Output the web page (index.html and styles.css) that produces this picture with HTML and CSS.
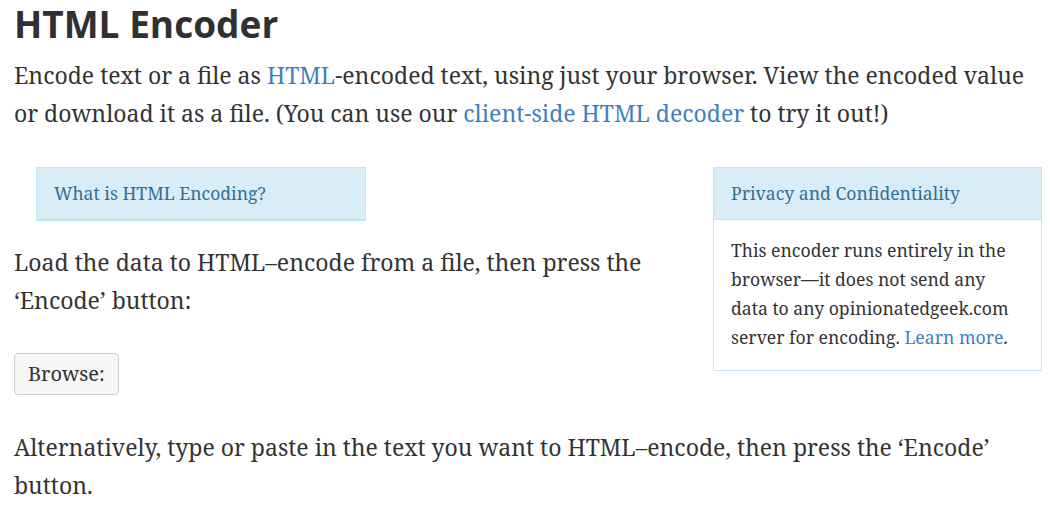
FILE: index.html
```html
<!DOCTYPE html>
<html lang="en">
<head>
<meta charset="utf-8">
<title>HTML Encoder</title>
<link rel="stylesheet" href="styles.css">
</head>
<body>
<main class="page">
  <h1 class="title">HTML Encoder</h1>
  <p class="lead">Encode text or a file as <a href="#">HTML</a>-encoded text, using just your browser. View the encoded value or download it as a file. (You can use our <a href="#">client-side HTML decoder</a> to try it out!)</p>

  <aside class="panel panel-right">
    <div class="panel-heading">Privacy and Confidentiality</div>
    <div class="panel-body">This encoder runs entirely in the browser—it does not send any data to any opinionatedgeek.com server for encoding. <a href="#">Learn more</a>.</div>
  </aside>

  <div class="panel panel-left">
    <div class="panel-heading">What is HTML Encoding?</div>
  </div>

  <p class="text text-load">Load the data to HTML–encode from a file, then press the ‘Encode’ button:</p>

  <div class="file-row"><button class="btn" type="button">Browse:</button></div>

  <p class="text">Alternatively, type or paste in the text you want to HTML–encode, then press the ‘Encode’ button.</p>
</main>
</body>
</html>
```

FILE: styles.css
```css
html, body {
  margin: 0;
  padding: 0;
  background: #ffffff;
}

body {
  font-family: "Noto Serif", "DejaVu Serif", "Liberation Serif", serif;
  color: #333333;
  font-size: 23px;
  line-height: 38px;
}

.page {
  padding: 0 8px 0 14px;
}

a {
  color: #3f7fc1;
  text-decoration: none;
}

.title {
  font-family: "Open Sans", "Noto Sans", sans-serif;
  font-weight: 700;
  font-size: 37px;
  line-height: 48px;
  color: #303033;
  margin: 0;
}

.lead {
  margin: 8px 0 35px 0;
}

.panel {
  border: 1px solid #bce8f1;
  background: #ffffff;
  font-size: 17.6px;
  line-height: 29px;
}

.panel-heading {
  background: #d9edf7;
  color: #31708f;
  padding: 11px 17px;
  border-bottom: 1px solid #bce8f1;
}

.panel-left {
  width: 328px;
  margin-left: 22px;
  margin-bottom: 22px;
}

.panel-right {
  float: right;
  width: 327px;
  margin-left: 20px;
}

.panel-body {
  padding: 16px 20px 18px 17px;
}

.text {
  margin: 0 0 33px 0;
}

.text-load {
  margin-bottom: 34px;
}

.file-row {
  margin-bottom: 33px;
}

.btn {
  font-family: "Noto Serif", "DejaVu Serif", "Liberation Serif", serif;
  font-size: 20px;
  line-height: 28px;
  color: #333333;
  background: #f7f7f7;
  border: 1px solid #cccccc;
  border-radius: 4px;
  padding: 6px 13px;
  margin: 0;
  display: block;
}
```
